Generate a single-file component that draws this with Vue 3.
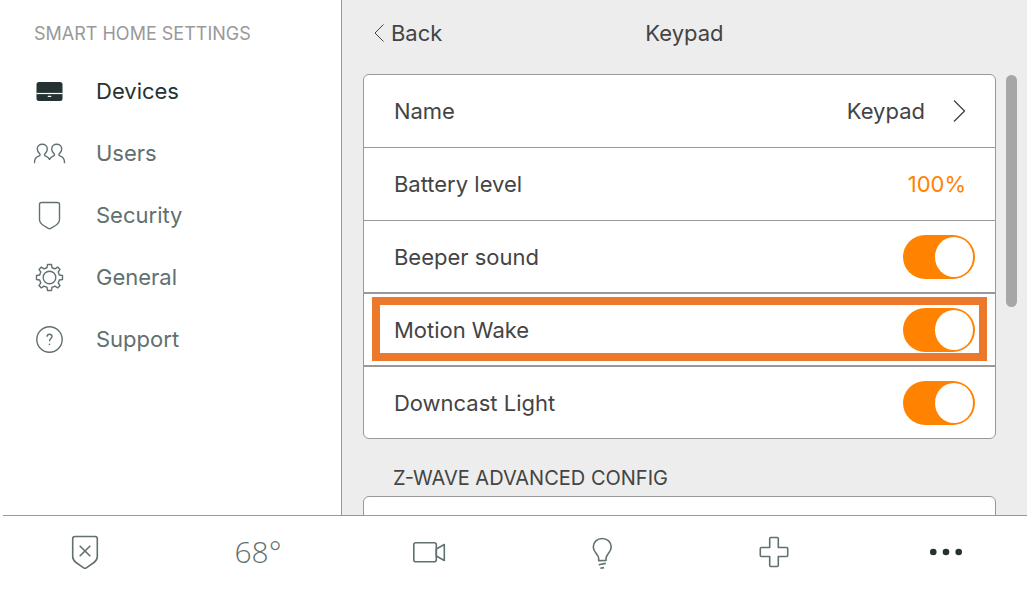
<script setup>
import { ref } from 'vue'

const sections = [
  { id: 'devices', label: 'Devices' },
  { id: 'users', label: 'Users' },
  { id: 'security', label: 'Security' },
  { id: 'general', label: 'General' },
  { id: 'support', label: 'Support' },
]
const active = ref('devices')

const toggles = ref([
  { id: 'beeper', label: 'Beeper sound', on: true, highlighted: false },
  { id: 'motion', label: 'Motion Wake', on: true, highlighted: true },
  { id: 'downcast', label: 'Downcast Light', on: true, highlighted: false },
])
</script>

<template>
  <div class="screen">
    <div class="main">
      <aside class="sidebar">
        <h2 class="sidebar-title">SMART HOME SETTINGS</h2>
        <nav class="sections" aria-label="Settings">
          <a
            v-for="s in sections"
            :key="s.id"
            :href="'#' + s.id"
            class="section"
            :class="{ active: s.id === active }"
            @click="active = s.id"
          >
            <svg class="section-icon" viewBox="0 0 32 32" aria-hidden="true">
              <g v-if="s.id === 'devices'">
                <rect x="2.500" y="7" width="26" height="19" rx="2.5" fill="#263232" stroke="none" />
                <path d="M2.500 18.5H28.500" stroke="#fff" stroke-width="1.2" />
                <path d="M14.300 21.4h2.4" stroke="#fff" stroke-width="1.2" stroke-linecap="round" />
              </g>
              <path
                v-else-if="s.id === 'users'"
                transform="translate(-0.5 0.7)"
                d="M1 25.5V24.5C1 21 3 19.3 5.2 18.5C6.7 18 7 17 6 15.8C4.5 14.3 3.8 12.8 3.8 11.2C3.8 8.400 6 6.500 8.800 6.500S13.800 8.400 13.800 11.200C13.800 12.800 13.100 14.300 11.600 15.800C10.500 17 10.900 18 12.300 18.500C14 19.200 15.300 20.300 16 21.700C16.700 20.300 18 19.200 19.700 18.500C21.100 18 21.500 17 20.400 15.800C18.900 14.300 18.200 12.800 18.200 11.200C18.200 8.400 20.400 6.500 23.200 6.500S28.200 8.400 28.200 11.200C28.200 12.800 27.500 14.300 26 15.800C25 17 25.300 18 26.800 18.500C29 19.300 31 21 31 24.500V25.500"
              />
              <path
                v-else-if="s.id === 'security'"
                d="M7.500 3.500H23.500Q25.500 3.500 25.500 5.500V20.500C25.500 23.500 23.500 25.200 21.500 26.500L16.700 29.400Q15.500 30.100 14.300 29.400L9.500 26.500C7.500 25.200 5.500 23.500 5.500 20.500V5.500Q5.500 3.500 7.500 3.500Z"
              />
              <g v-else-if="s.id === 'general'" transform="translate(-0.5 0.5)">
                <circle cx="16" cy="16" r="6.300" />
                <path
                  d="M14 3H18L18.500 6.200C19.600 6.500 20.500 6.900 21.400 7.400L24.200 5.600L26.500 7.900L24.700 10.700C25.200 11.500 25.500 12.400 25.800 13.500L29 14V18L25.800 18.500C25.500 19.600 25.200 20.500 24.700 21.300L26.500 24.100L24.200 26.400L21.400 24.600C20.500 25.100 19.600 25.500 18.500 25.800L18 29H14L13.500 25.800C12.400 25.500 11.500 25.100 10.600 24.600L7.800 26.400L5.500 24.100L7.300 21.300C6.800 20.500 6.500 19.600 6.200 18.500L3 18V14L6.200 13.500C6.500 12.400 6.800 11.500 7.300 10.700L5.500 7.900L7.800 5.600L10.600 7.400C11.500 6.900 12.400 6.500 13.500 6.200Z"
                />
              </g>
              <g v-else>
                <circle cx="15.500" cy="16.500" r="12.700" />
                <path d="M13.100 13.700C13.100 12.200 14.100 11.300 15.500 11.300C17 11.300 18 12.200 18 13.600C18 15.600 15.500 15.700 15.500 18.300" />
                <path d="M15.500 20.700V22" />
              </g>
            </svg>
            <span>{{ s.label }}</span>
          </a>
        </nav>
      </aside>

      <section class="panel">
        <header class="panel-header">
          <button class="back" type="button">
            <svg class="back-icon" viewBox="0 0 12 20" aria-hidden="true">
              <path d="M10.500 1.500L2 10L10.500 18.500" />
            </svg>
            <span>Back</span>
          </button>
          <h1 class="panel-title">Keypad</h1>
        </header>

        <div class="panel-body">
          <div class="content">
            <div class="card">
              <button class="row row-link" type="button">
                <span>Name</span>
                <span class="row-value">
                  Keypad
                  <svg class="chevron" viewBox="0 0 14 24" aria-hidden="true">
                    <path d="M2 1.500L12.500 12L2 22.500" />
                  </svg>
                </span>
              </button>
              <div class="row">
                <span>Battery level</span>
                <span class="row-value level">100%</span>
              </div>
              <div
                v-for="t in toggles"
                :key="t.id"
                class="row row-toggle"
                :class="{ highlighted: t.highlighted }"
              >
                <label :for="t.id">{{ t.label }}</label>
                <input :id="t.id" v-model="t.on" class="switch" type="checkbox" />
              </div>
            </div>

            <h2 class="group-title">Z-WAVE ADVANCED CONFIG</h2>
            <div class="card">
              <div class="row"></div>
            </div>
          </div>
          <div class="scroll-thumb"></div>
        </div>
      </section>
    </div>

    <nav class="tabs" aria-label="Main">
      <button class="tab" type="button" aria-label="Alarm">
        <svg class="tab-icon" viewBox="0 0 36 36">
          <path d="M7 2.500H27Q29.300 2.500 29.300 4.800V22.500C29.300 25.500 28 27 26 28.500L18.300 33.800Q17 34.700 15.700 33.800L8 28.500C6 27 4.700 25.500 4.700 22.500V4.800Q4.700 2.500 7 2.500Z" />
          <path d="M11.700 11.700L22.300 22.300M22.300 11.700L11.700 22.300" />
        </svg>
      </button>
      <button class="tab temperature" type="button">68°</button>
      <button class="tab" type="button" aria-label="Cameras">
        <svg class="tab-icon" viewBox="0 0 36 36">
          <rect x="1.800" y="8.700" width="22.500" height="19" rx="2" />
          <path d="M24.300 15L32.300 10.500V26.500L24.300 22Z" />
        </svg>
      </button>
      <button class="tab" type="button" aria-label="Lights">
        <svg class="tab-icon" viewBox="0 0 36 36">
          <path d="M14.700 26.800V24.500C14.700 22.500 13.500 21.200 12 19.300C10.300 17.300 9.300 15.500 9.300 13C9.300 8.200 13.200 4.500 18.200 4.500S27.200 8.200 27.200 13C27.200 15.500 26.200 17.300 24.500 19.300C23 21.200 22 22.500 22 24.500V26.400Z" />
          <path d="M14.700 30.700L21.800 29.400M16.300 34.300L20 33.600" />
        </svg>
      </button>
      <button class="tab" type="button" aria-label="Add">
        <svg class="tab-icon" viewBox="0 0 36 36">
          <path d="M14.700 3.500H21.300Q22.300 3.500 22.300 4.500V13.500H30.700Q31.700 13.500 31.700 14.500V21.500Q31.700 22.500 30.700 22.500H22.300V31.500Q22.300 32.500 21.300 32.500H14.700Q13.700 32.500 13.700 31.500V22.500H5.300Q4.300 22.500 4.300 21.500V14.500Q4.300 13.500 5.300 13.500H13.700V4.500Q13.700 3.500 14.700 3.500Z" />
        </svg>
      </button>
      <button class="tab" type="button" aria-label="More">
        <svg class="tab-icon" viewBox="0 0 36 36">
          <g fill="#263232" stroke="none">
            <circle cx="5.300" cy="18" r="3.300" />
            <circle cx="18" cy="18" r="3.300" />
            <circle cx="30.700" cy="18" r="3.300" />
          </g>
        </svg>
      </button>
    </nav>
  </div>
</template>

<style>
body {
  margin: 0;
  background: #fff;
}
</style>

<style scoped>
.screen {
  display: flex;
  flex-direction: column;
  height: 100vh;
  box-sizing: border-box;
  overflow: hidden;
  font-family: Inter, "Liberation Sans", sans-serif;
  font-size: 22px;
  line-height: 28px;
  color: #444;
}

h1,
h2 {
  margin: 0;
  font-weight: 400;
}

button {
  margin: 0;
  padding: 0;
  border: 0;
  background: none;
  color: inherit;
  font: inherit;
  cursor: pointer;
}

svg {
  fill: none;
  stroke: currentColor;
  stroke-linejoin: round;
}

.main {
  flex: 1;
  min-height: 0;
  display: grid;
  grid-template-columns: 33% 1fr;
  margin: 0 5px 0 3px;
  border-bottom: 1px solid #999;
}

.sidebar {
  padding: 20px 31px;
}

.sidebar-title {
  font-size: 18px;
  color: #999;
  white-space: nowrap;
}

.sections {
  display: flex;
  flex-direction: column;
  margin-top: 12px;
}

.section {
  display: flex;
  align-items: center;
  gap: 30px;
  height: 62px;
  color: #617070;
  text-decoration: none;
}

.section.active {
  color: #263232;
}

.section-icon {
  width: 32px;
  height: 32px;
  stroke-width: 1.4;
}

.panel {
  display: flex;
  flex-direction: column;
  min-width: 0;
  min-height: 0;
  border-left: 1px solid #999;
  background: #ededed;
}

.panel-header {
  display: grid;
  grid-template-columns: 1fr auto 1fr;
  align-items: center;
  height: 66px;
  margin-bottom: 8px;
  padding: 0 31px;
}

.back {
  display: flex;
  align-items: center;
  gap: 6px;
  justify-self: start;
}

.back-icon {
  width: 12px;
  height: 20px;
}

.panel-title {
  font-size: 22px;
}

.panel-body {
  flex: 1;
  min-height: 0;
  display: flex;
  gap: 10px;
  padding: 0 10px 0 21px;
  overflow: hidden;
}

.content {
  flex: 1;
  min-width: 0;
}

.card {
  border: 1px solid #999;
  border-radius: 6px;
  background: #fff;
}

.row {
  position: relative;
  display: flex;
  align-items: center;
  justify-content: space-between;
  width: 100%;
  height: 73px;
  box-sizing: border-box;
  padding: 0 29px 0 30px;
  border-bottom: 1px solid #999;
  text-align: left;
}

.row-toggle {
  padding-right: 20px;
  border-bottom-width: 2px;
}

.row:last-child {
  height: 71px;
  border-bottom: 0;
}

.row-value {
  display: flex;
  align-items: center;
  gap: 27px;
}

.level {
  color: #ff8300;
}

.chevron {
  width: 14px;
  height: 24px;
  stroke-width: 1.3;
}

.switch {
  appearance: none;
  display: flex;
  align-items: center;
  width: 72px;
  height: 44px;
  box-sizing: border-box;
  margin: 0;
  padding: 0 2px;
  border-radius: 22px;
  background: #999;
  cursor: pointer;
}

.switch::before {
  content: "";
  width: 38px;
  height: 40px;
  border-radius: 50%;
  background: #fff;
}

.switch:checked {
  justify-content: flex-end;
  background: #ff8300;
}

.highlighted::after {
  content: "";
  position: absolute;
  inset: 3px 8px 4px;
  border: 8px solid #ec782b;
  pointer-events: none;
}

.group-title {
  padding: 25px 30px 4px;
  font-size: 20px;
}

.scroll-thumb {
  width: 11px;
  height: 232px;
  margin-top: 1px;
  border-radius: 6px;
  background: #a6a6a6;
}

.tabs {
  display: grid;
  grid-template-columns: repeat(6, 1fr);
  height: 77px;
  box-sizing: border-box;
  padding-bottom: 6px;
  color: #617070;
}

.tab {
  display: flex;
  align-items: center;
  justify-content: center;
}

.tab-icon {
  width: 36px;
  height: 36px;
  stroke-width: 1.6;
}

.temperature {
  font-family: "Open Sans", Inter, sans-serif;
  font-size: 30px;
  font-weight: 300;
}
</style>
